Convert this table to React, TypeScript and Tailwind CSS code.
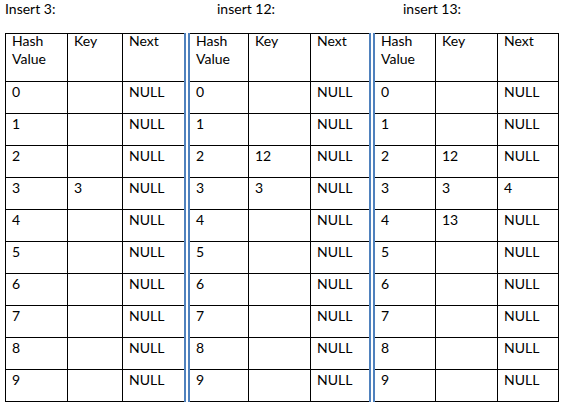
import React from "react";

type Row = [string, string, string];

const t1: Row[] = Array.from({ length: 10 }, (_, i) => [String(i), i === 3 ? "3" : "", "NULL"]);
const t2: Row[] = Array.from({ length: 10 }, (_, i) => [
  String(i),
  i === 2 ? "12" : i === 3 ? "3" : "",
  "NULL",
]);
const t3: Row[] = Array.from({ length: 10 }, (_, i) => [
  String(i),
  i === 2 ? "12" : i === 3 ? "3" : i === 4 ? "13" : "",
  i === 3 ? "4" : "NULL",
]);

function Table({
  rows,
  cols,
  leftBorder,
  rightBorder,
}: {
  rows: Row[];
  cols: string;
  leftBorder?: boolean;
  rightBorder?: boolean;
}) {
  const cell = (c: number, extra: string) =>
    `border-b border-black pl-[6px] ${c < 2 || rightBorder ? "border-r" : ""} ${extra}`;
  return (
    <div
      className={`grid border-t border-black ${leftBorder ? "border-l" : ""}`}
      style={{ gridTemplateColumns: cols }}
    >
      {["Hash Value", "Key", "Next"].map((h, c) => (
        <div key={h} className={cell(c, "h-[48px]")}>
          <div className="-mt-[2px] w-[40px]">{h}</div>
        </div>
      ))}
      {rows.map((r, ri) =>
        r.map((v, c) => (
          <div key={`${ri}-${c}`} className={cell(c, "h-[32px] pt-[1px]")}>
            {v}
          </div>
        ))
      )}
    </div>
  );
}

function Sep() {
  return <div className="w-[6px] shrink-0 border-x-2 border-[#4f81bd] bg-white" />;
}

export default function App() {
  return (
    <div
      className="w-[567px] h-[406px] bg-white text-black pl-[5px] text-[14px] leading-[17.7px] overflow-hidden"
      style={{ fontFamily: "Lato, 'Liberation Sans', sans-serif" }}
    >
      <div className="flex h-[33px]">
        <span className="w-[212px] shrink-0">Insert 3:</span>
        <span className="w-[186px] shrink-0">insert 12:</span>
        <span>insert 13:</span>
      </div>
      <div className="flex">
        <Table rows={t1} cols="62px 55px 61px" leftBorder />
        <Sep />
        <Table rows={t2} cols="59px 62px 58px" />
        <Sep />
        <Table rows={t3} cols="61px 62px 61px" rightBorder />
      </div>
    </div>
  );
}
